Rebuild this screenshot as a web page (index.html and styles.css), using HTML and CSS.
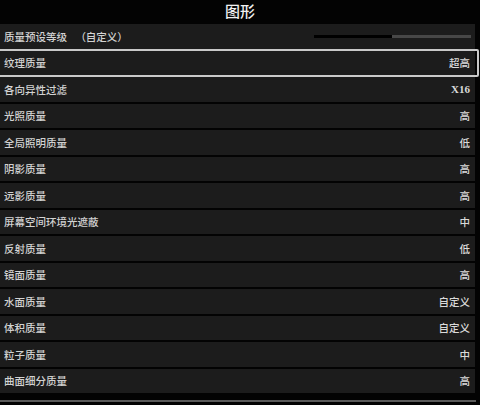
FILE: index.html
```html
<!DOCTYPE html>
<html lang="zh">
<head>
<meta charset="utf-8">
<link rel="stylesheet" href="styles.css">
</head>
<body>
<div class="screen">
  <div class="title">图形</div>
  <div class="list">
    <div class="row">
      <span class="label">质量预设等级 <span class="paren">（自定义）</span></span>
      <div class="slider"><div class="fill"></div><div class="rest"></div></div>
    </div>
    <div class="row selected"><span class="label">纹理质量</span><span class="value">超高</span></div>
    <div class="row"><span class="label">各向异性过滤</span><span class="value latin">X16</span></div>
    <div class="row"><span class="label">光照质量</span><span class="value">高</span></div>
    <div class="row"><span class="label">全局照明质量</span><span class="value">低</span></div>
    <div class="row"><span class="label">阴影质量</span><span class="value">高</span></div>
    <div class="row"><span class="label">远影质量</span><span class="value">高</span></div>
    <div class="row"><span class="label">屏幕空间环境光遮蔽</span><span class="value">中</span></div>
    <div class="row"><span class="label">反射质量</span><span class="value">低</span></div>
    <div class="row"><span class="label">镜面质量</span><span class="value">高</span></div>
    <div class="row"><span class="label">水面质量</span><span class="value">自定义</span></div>
    <div class="row"><span class="label">体积质量</span><span class="value">自定义</span></div>
    <div class="row"><span class="label">粒子质量</span><span class="value">中</span></div>
    <div class="row"><span class="label">曲面细分质量</span><span class="value">高</span></div>
  </div>
  <div class="bottom-line"></div>
</div>
</body>
</html>
```

FILE: styles.css
```css
html, body {
  margin: 0;
  padding: 0;
  background: #000;
}
.screen {
  width: 480px;
  height: 405px;
  background: #030303;
  font-family: "Noto Sans CJK SC", "DejaVu Sans", sans-serif;
  color: #d2d2d2;
  display: flex;
  flex-direction: column;
  overflow: hidden;
}
.title {
  height: 24px;
  line-height: 22px;
  text-align: center;
  font-size: 15px;
  font-weight: 500;
  color: #f0f0f0;
}
.list {
  display: flex;
  flex-direction: column;
  gap: 2px;
  width: 475px;
}
.row {
  position: relative;
  height: 24.5px;
  background: #1c1c1c;
  display: flex;
  align-items: center;
  justify-content: space-between;
  padding: 0 5px 0 4px;
  font-size: 10.5px;
  font-weight: 500;
}
.label .paren {
  margin-left: 6px;
}
.value {
  color: #dadada;
}
.latin {
  font-family: "Liberation Serif", serif;
  font-size: 11px;
  font-weight: 700;
}
.selected::after {
  content: "";
  position: absolute;
  left: -2px;
  right: -4px;
  top: -2px;
  bottom: -2px;
  border: 2px solid #c9c9c9;
  border-radius: 2px;
}
.slider {
  display: flex;
  width: 157px;
  height: 3px;
  margin-right: -1px;
}
.slider .fill {
  width: 78px;
  background: #000;
}
.slider .rest {
  flex: 1;
  background: #474747;
}
.bottom-line {
  margin-top: 7px;
  width: 476px;
  height: 2px;
  background: #5a5a5a;
}
```
